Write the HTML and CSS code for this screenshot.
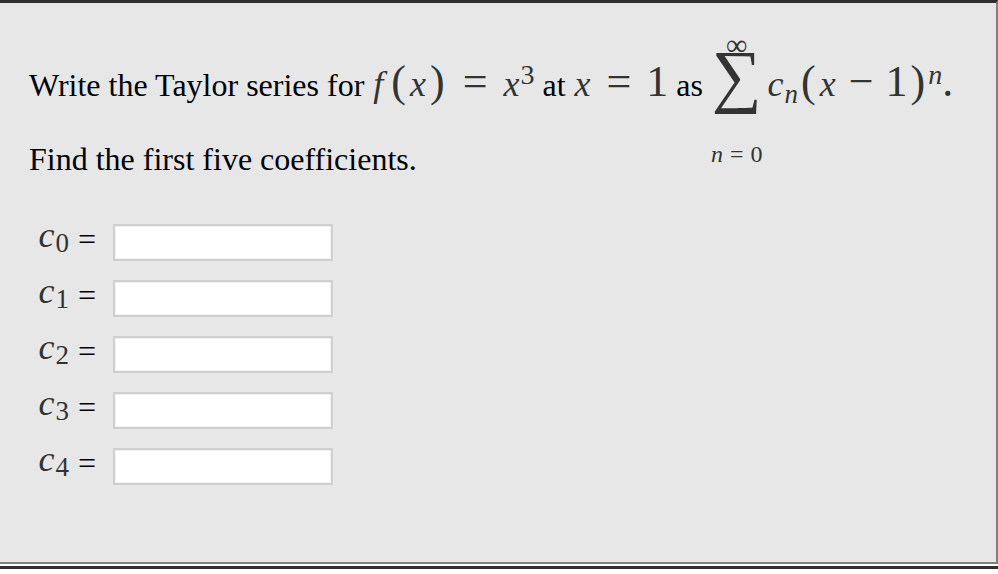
FILE: index.html
```html
<!DOCTYPE html>
<html lang="en">
<head>
  <meta charset="UTF-8" />
  <title>Taylor series question</title>
  <link rel="stylesheet" href="styles.css">
</head>
<body>

<div class="panel">
  <p class="q q1">Write the Taylor series for <span class="m"><i class="mi f">f</i><span class="p">(</span><i class="mi">x</i><span class="p">)</span><span class="op">=</span><i class="mi">x</i><sup class="sup">3</sup></span> at <span class="m"><i class="mi">x</i><span class="op">=</span>1</span> as <span class="sum"><span class="top">∞</span><span class="sig">∑</span><span class="bot"><i>n</i><span class="eq">=</span>0</span></span><span class="m"><i class="mi">c</i><sub class="sub"><i>n</i></sub><span class="p">(</span><i class="mi">x</i><span class="op minus">−</span>1<span class="p">)</span><sup class="sup"><i>n</i></sup>.</span></p>

  <p class="q q2">Find the first five coefficients.</p>

  <div class="coeffs">
    <label class="row"><span class="lbl"><span class="m"><i class="mi">c</i><sub class="idx">0</sub></span><span class="is">=</span></span><input type="text"></label>
    <label class="row"><span class="lbl"><span class="m"><i class="mi">c</i><sub class="idx">1</sub></span><span class="is">=</span></span><input type="text"></label>
    <label class="row"><span class="lbl"><span class="m"><i class="mi">c</i><sub class="idx">2</sub></span><span class="is">=</span></span><input type="text"></label>
    <label class="row"><span class="lbl"><span class="m"><i class="mi">c</i><sub class="idx">3</sub></span><span class="is">=</span></span><input type="text"></label>
    <label class="row"><span class="lbl"><span class="m"><i class="mi">c</i><sub class="idx">4</sub></span><span class="is">=</span></span><input type="text"></label>
  </div>
</div>
<div class="rule"></div>

</body>
</html>
```

FILE: styles.css
```css
body { margin: 0; background: #fff; font-family: "Liberation Serif", serif; color: #000; }

.panel { box-sizing: border-box; height: 564px; background: #e7e7e7; border-top: 3px solid #2f2f2f; border-right: 2px solid #808080; border-bottom: 2px solid #808080; padding: 62px 0 0 29px; }
.rule { height: 3px; margin-top: 2px; background: #2f2f2f; }

.q { margin: 0; font-size: 32px; line-height: 40px; }
.q2 { margin-top: 34px; }

/* math bits */
.m { font-size: 44px; line-height: 0; color: #333; }
.m i, .sum i { font-style: italic; }
.mi { font-size: 36px; margin: 0 1px; }
.f { margin-right: 5px; }
.p { margin: 0 3px; }
.op { margin: 0 15px; }
.op.minus { margin: 0 12px; }
.sup { font-size: 28px; line-height: 0; vertical-align: 12px; }
.sub { font-size: 27px; line-height: 0; vertical-align: -7px; }

.sum { display: inline-block; vertical-align: -66px; margin: -100px 4px -100px 0; text-align: center; color: #333; }
.sum .top { display: block; font-size: 30px; line-height: 20px; margin-bottom: -12px; }
.sum .sig { display: block; font-size: 70px; line-height: 66px; }
.sum .bot { display: block; font-size: 24px; line-height: 22px; margin-top: 34px; }
.sum .eq { margin: 0 7px; }

.coeffs { margin-top: 45px; }
.row { display: flex; align-items: center; height: 37px; margin-bottom: 19px; }
.lbl { box-sizing: border-box; width: 84px; padding-right: 17px; text-align: right; line-height: 37px; white-space: nowrap; }
.lbl .m { vertical-align: 5px; }
.idx { font-size: 27px; line-height: 0; vertical-align: -5px; }
.is { font-size: 32px; margin-left: 9px; vertical-align: 2px; }
.row input { box-sizing: border-box; width: 220px; height: 37px; margin: 0; border: 2px solid #cfcfcf; background: #fff; box-shadow: inset 0 0 0 1px #f1f1f1; font: inherit; }
```
